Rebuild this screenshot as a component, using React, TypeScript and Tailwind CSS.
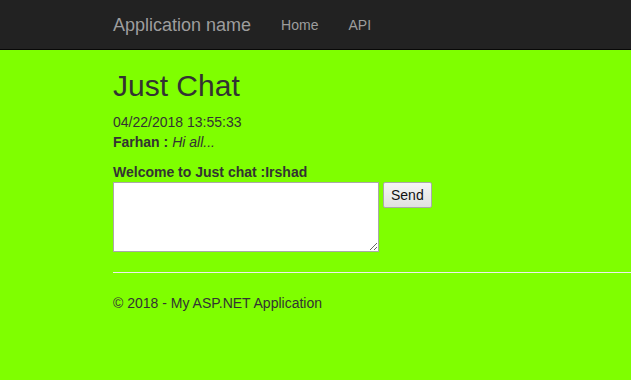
export default function App() {
  return (
    <div className="min-h-[380px] bg-[#7fff00] text-[#333] text-sm leading-5 font-['Liberation_Sans',Arial,sans-serif] overflow-hidden">
      <nav className="h-[50px] bg-[#222] border-b border-[#080808] flex items-center pl-[113px]">
        <a className="text-[18px] text-[#9d9d9d] mr-[15px]">Application name</a>
        <a className="text-[#9d9d9d] px-[15px]">Home</a>
        <a className="text-[#9d9d9d] px-[15px]">API</a>
      </nav>
      <main className="pl-[113px]">
        <h2 className="text-[30px] leading-[33px] mt-[19px] mb-[10px]">Just Chat</h2>
        <div>04/22/2018 13:55:33</div>
        <div>
          <b>Farhan : </b>
          <i>Hi all...</i>
        </div>
        <div className="mt-[10px] font-bold">Welcome to Just chat :Irshad</div>
        <div className="flex items-start gap-1">
          <textarea className="w-[266px] h-[70px] bg-white border border-[#a9a9a9] resize" />
          <button className="h-[26px] px-[7px] border border-[#a9a9a9] rounded-[2px] bg-gradient-to-b from-[#f5f5f5] to-[#e1e1e1] text-[#111]">
            Send
          </button>
        </div>
        <hr className="mt-5 border-t border-[#eee]" />
        <footer className="mt-5">© 2018 - My ASP.NET Application</footer>
      </main>
    </div>
  );
}
